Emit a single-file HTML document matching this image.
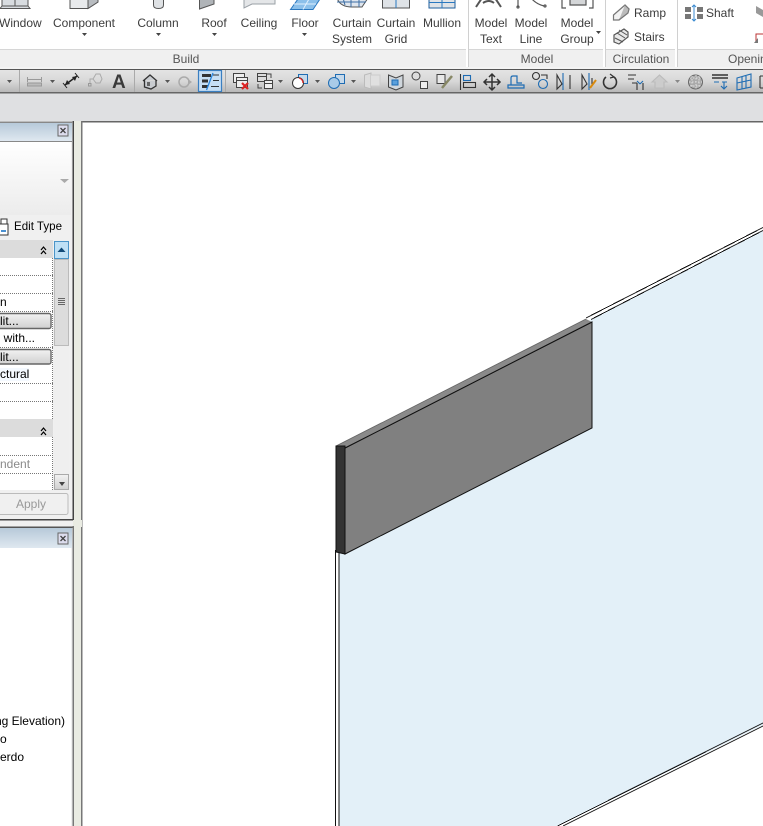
<!DOCTYPE html>
<html><head><meta charset="utf-8"><style>
html,body{margin:0;padding:0;background:#fff;width:763px;height:826px;overflow:hidden}
svg{display:block}
text{font-family:"Liberation Sans",sans-serif;font-size:12px;fill:#3c3c3c}
.c{text-anchor:middle}
.k{fill:#000}
.tt{fill:#555}
</style></head><body>
<svg width="763" height="826" viewBox="0 0 763 826" xmlns="http://www.w3.org/2000/svg">
<defs>
<linearGradient id="tb" x1="0" y1="0" x2="0" y2="1"><stop offset="0" stop-color="#e4e4e4"/><stop offset=".5" stop-color="#d8d8d8"/><stop offset="1" stop-color="#b8b8b8"/></linearGradient>
<linearGradient id="tl" x1="0" y1="0" x2="0" y2="1"><stop offset="0" stop-color="#b7c9d9"/><stop offset="1" stop-color="#dfe8f0"/></linearGradient>
<linearGradient id="pv" x1="0" y1="0" x2="0" y2="1"><stop offset="0" stop-color="#fff"/><stop offset="1" stop-color="#ececec"/></linearGradient>
<linearGradient id="bt" x1="0" y1="0" x2="0" y2="1"><stop offset="0" stop-color="#f2f2f2"/><stop offset="1" stop-color="#d0d0d0"/></linearGradient>
</defs>

<!-- ribbon -->
<rect width="763" height="50" fill="#fff"/>
<rect y="49" width="763" height="1" fill="#d6d6d6"/>
<rect y="50" width="763" height="17" fill="#f0f0f0"/>
<rect x="468" y="0" width="1" height="67" fill="#d0d0d0"/><rect x="605" y="0" width="1" height="67" fill="#d0d0d0"/><rect x="677" y="0" width="1" height="67" fill="#d0d0d0"/>
<rect x="466" y="0" width="2" height="67" fill="#fff"/><rect x="603" y="0" width="2" height="67" fill="#fff"/><rect x="675" y="0" width="2" height="67" fill="#fff"/>

<!-- ribbon icons -->
<g stroke="#555" stroke-width="1" fill="#eef0f2">
<path d="M2-2V6H28V-2M2 6L0 8.500H30L28 6" fill="#d8dce0"/><path d="M15-2V6" />
<path d="M70 1V8.500H88L98 2V-2H70Z" fill="#e8eaec"/><path d="M88 8.500V0" fill="none"/><path d="M88 8.500L98 2V-2H88Z" fill="#b8bcc0"/>
<path d="M153.500-2V5Q153.500 8.500 158.500 8.500T163.500 5V-2" fill="#dfe2e5"/>
<path d="M199.500-2V9L214 4V-2Z" fill="#b0b4b8"/>
<path d="M244-2V8L252 4H275V-2" fill="#e4e6e8" stroke="#9aa0a6"/>
<path d="M290.500 9.500L298-1H320L313 9.500Z" fill="#8cc0ea" stroke="#2a78c0"/><path d="M294 4H316M303 9.500L309-1" stroke="#e0f0ff" fill="none"/>
<path d="M337-2Q340 7 352 7H362L368-2" fill="#dfe6ee" stroke="#555"/><path d="M343-2L345 5M351-2V7M359-2V7M337 2H366" fill="none" stroke="#3d6fa5"/>
<path d="M382.500-2V8H409.500V-2" fill="#dfe3e7"/><path d="M396-2V8" stroke="#2a78c0"/>
<path d="M429-2V8H455V-2" fill="#dfe3e7" stroke="#1f5f9e"/><path d="M429 2.500H455M442-2V8" stroke="#2a78c0" fill="none"/>
</g>
<g fill="none" stroke="#555" stroke-width="1.200">
<path d="M476 7L482-2M501 7L495-2M483 3Q489-1 494 3" stroke-width="2"/>
<path d="M518 7V0" /><circle cx="518" cy="7" r="1"/><path d="M531-2Q536 4 544 6"/><circle cx="545" cy="6" r="1"/>
<path d="M562-2V8H566M593-2V8H589"/><path d="M570 5H586V-2H570Z" fill="#d4d6d8"/>
<path d="M613.500 15L625 5L629 9L619 20H613.500Z" fill="#f2f2f2" stroke="#777"/><path d="M625 5L629 9L628 13L619 20" fill="#bbb" stroke="#777"/>
<path d="M614 35L624 29L628 32V37L619 44L614 42Z" fill="#e8e8e8"/><path d="M617 33L625 38M615 38L623 42M619 30L627 35" stroke-width="1"/>
</g>
<g fill="#777"><rect x="685" y="7" width="6" height="5"/><rect x="685" y="14" width="6" height="5"/><rect x="697" y="7" width="6" height="5"/><rect x="697" y="14" width="6" height="5"/></g>
<path d="M694 5V21M692 7L694 5L696 7M692 19L694 21L696 19" stroke="#3a8ad0" stroke-width="1" fill="none"/>
<path d="M756 6L763 10V17L756 13Z" fill="#999"/><path d="M756 42V34H763" fill="none" stroke="#b33" stroke-width="1"/><path d="M754 43L758 38V43Z" fill="#777"/>

<!-- ribbon text -->
<text x="-1" y="27">Window</text>
<text x="84" y="27" class="c" textLength="62" lengthAdjust="spacingAndGlyphs">Component</text>
<text x="158" y="27" class="c">Column</text>
<text x="214" y="27" class="c">Roof</text>
<text x="259" y="27" class="c">Ceiling</text>
<text x="305" y="27" class="c">Floor</text>
<text x="352" y="27" class="c">Curtain</text><text x="352" y="43" class="c">System</text>
<text x="396" y="27" class="c">Curtain</text><text x="396" y="43" class="c">Grid</text>
<text x="442" y="27" class="c">Mullion</text>
<text x="491" y="27" class="c">Model</text><text x="491" y="43" class="c">Text</text>
<text x="531" y="27" class="c">Model</text><text x="531" y="43" class="c">Line</text>
<text x="577" y="27" class="c">Model</text><text x="577" y="43" class="c">Group</text>
<text x="634" y="17">Ramp</text><text x="634" y="41">Stairs</text><text x="706" y="17">Shaft</text>
<text x="186" y="63" class="c tt">Build</text><text x="537" y="63" class="c tt">Model</text><text x="641" y="63" class="c tt">Circulation</text><text x="728" y="63" class="tt">Openin</text>
<g fill="#444"><path d="M82 33H87L84.500 36ZM156 33H161L158.500 36ZM212 33H217L214.500 36ZM302 33H307L304.500 36ZM596 31H601L598.500 34Z"/></g>

<!-- toolbar -->
<rect y="67" width="763" height="2" fill="#f4f4f4"/>
<rect y="69" width="763" height="1" fill="#555"/>
<rect y="70" width="763" height="22" fill="url(#tb)"/>
<rect y="92" width="763" height="1.500" fill="#666"/>
<rect y="93.500" width="763" height="28" fill="#dfe0e2"/>
<path d="M19.500 70V92M134.500 70V92M225.500 70V92" stroke="#aaa"/>
<g fill="#555">
<path d="M7 80H12L9.500 83ZM50 80H55L52.500 83ZM165 80H170L167.500 83ZM278 80H283L280.500 83ZM315 80H320L317.500 83ZM351 80H356L353.500 83Z"/>
<path d="M675 80H680L677.500 83Z" fill="#888"/>
</g>
<!-- tool icons -->
<g fill="none" stroke="#777" stroke-width="1">
<path d="M27.500 77V82M41.500 77V82M28 79.500H41" stroke="#999"/><rect x="27.500" y="83" width="14" height="3" fill="#bbb" stroke="#999"/>
<path d="M65 85L77 76" stroke="#222" stroke-width="1.500"/><path d="M63 83L67 88M75 73L79 78" stroke="#222"/><path d="M65 85L70 84L67 80ZM77 76L72 77L75 81Z" fill="#222" stroke="none"/>
<rect x="88.500" y="83.500" width="2.500" height="2.500" stroke="#999"/><path d="M90 83V79H93M93 79L96 74H100L102 79L100 83H96Z" stroke="#aaa"/>
<path d="M143 81L150 75L157 81M144.500 80V87L151 89L156 86V80" stroke="#333" stroke-width="1.300" fill="#c9ccd0"/><rect x="147" y="82" width="3" height="4" fill="#666" stroke="none"/>
<circle cx="184" cy="82" r="5" stroke="#aaa" stroke-width="1.500"/><path d="M188 79L192 82L188 85Z" fill="#aaa" stroke="none"/>
</g>
<text x="112" y="88" style="font-size:19px;font-weight:bold;fill:#3a3a3a">A</text>
<rect x="198.500" y="70.500" width="23" height="21" fill="#c6def3" stroke="#3a7fc1" stroke-width="1.200"/>
<g fill="#333"><rect x="202" y="74" width="9" height="3"/><rect x="202" y="79.500" width="6" height="3"/><rect x="202" y="85" width="6" height="3"/></g>
<path d="M213 75H219M213 80.500H219M211 86.500H219" stroke="#333"/><path d="M213 73L206.500 90" stroke="#2a86dd" stroke-width="1.300"/>

<g fill="#eee" stroke="#444" stroke-width="1">
<rect x="233.500" y="73.500" width="11" height="9"/><rect x="236.500" y="77.500" width="11" height="10"/><path d="M237 80.500H247" fill="none"/>
<rect x="257.500" y="73.500" width="9" height="8" fill="#ddd"/><rect x="264.500" y="80.500" width="8" height="8"/><path d="M258 76.500H266M265 83.500H272" fill="none"/>
<path d="M267 74L271 74V78M258 84V88H262" fill="none"/>
<rect x="298.500" y="74.500" width="9" height="9" fill="#c6d9ea" stroke="#1e6cb3"/><circle cx="298" cy="83" r="5.500" fill="#fff" stroke="#333"/>
<rect x="335.500" y="74.500" width="9" height="9" fill="#c6d9ea" stroke="#1e6cb3"/><circle cx="334" cy="83" r="5.500" fill="#a9cbe8" stroke="#1e6cb3"/>
<path d="M364.500 75L371 73V89L364.500 87Z" fill="#ddd" stroke="#bbb"/><path d="M371 75H380V86H371" stroke="#ccc" fill="#e0e0e0"/>
<path d="M388.500 75L396 78L403 75V87L396 90L388.500 87Z" fill="#cfd6dc"/><rect x="392" y="80" width="6" height="5" fill="#5aa0dc" stroke="#1e6cb3"/>
<circle cx="416" cy="76" r="4" fill="#ddd"/><rect x="420.500" y="81.500" width="7" height="7"/>
<rect x="437" y="74.500" width="8" height="9" fill="#e8e8e8"/><path d="M442 88L452 76" stroke="#886" stroke-width="2.500" fill="none"/>
</g>
<path d="M299 78A5 5 0 0 1 303 83" stroke="#d22" fill="none" stroke-width="1.300"/>
<path d="M242 83L248 89M248 83L242 89" stroke="#d22" stroke-width="2.200"/>
<g fill="none" stroke="#333" stroke-width="1.100">
<path d="M460.500 74V90"/><rect x="463.500" y="75.500" width="7" height="5" stroke="#1e6cb3"/><rect x="463.500" y="82.500" width="12" height="5"/>
<path d="M492 74V90M484 82H500M489 77L492 74L495 77M489 87L492 90L495 87M487 79L484 82L487 85M497 79L500 82L497 85" stroke-width="1.500"/>
<path d="M508 85H524V88H508ZM511 85V78Q511 76 513 76H517V83H522" stroke="#1e6cb3" stroke-width="1.200"/>
<circle cx="536" cy="76" r="3.500"/><circle cx="543" cy="84" r="4.500" stroke="#1e6cb3"/><path d="M541 75H547V79"/>
<path d="M557 75V89L562 84ZM570 75V89" /><path d="M563 73V90" stroke="#1e6cb3"/>
<path d="M582 75V89L587 84ZM592 78V84" /><path d="M589 73V90" stroke="#1e6cb3"/><path d="M590 88L596 80" stroke="#d88a10" stroke-width="2"/>
<path d="M606 77A6.500 6.500 0 1 0 614 77" stroke-width="1.600"/><path d="M610 74L614 77L610 78" stroke-width="1.200"/>
<path d="M628 75H636M628 79H634M637 83V90M643 83V90M632 83H637" /><path d="M640 84L637 81M640 84L643 81" stroke="#1e6cb3"/>
<path d="M652 82L659.500 75L667 82H664V88H655V82Z" fill="#ccc" stroke="#bbb"/>
<path d="M712 75H728M712 78H728" stroke-width="1.400"/><path d="M714 82H719M722 82H727M724 82V88M721 86L724 89L727 86" stroke="#1e6cb3"/>
<path d="M737 78L751 74V87L737 90ZM737 83L751 80M742 77V89M746 76V88" stroke="#1e6cb3"/>
<path d="M760 76H763M760 88H763M760 76V88"/>
</g>
<circle cx="695.500" cy="82" r="7" fill="#aaa" stroke="#666"/>
<path d="M690 78H701M689 82H702M690 86H701M692 76V88M696 75V89M699 76V88" stroke="#e0e0e0" stroke-dasharray="1.500 1.500"/>

<!-- background gutter -->
<rect x="73" y="121" width="9" height="705" fill="#e9ebe2"/>
<rect x="0" y="121" width="73" height="705" fill="#f0f0f0"/>
<!-- canvas -->
<rect x="82" y="122" width="681" height="704" fill="#fff"/>
<rect x="81" y="121" width="682" height="1.500" fill="#666"/>
<rect x="81" y="121" width="1.500" height="705" fill="#777"/>

<!-- wall -->
<path d="M339.500 826V448L591 319.500L763 230V725L558 826Z" fill="#e3f0f8"/>
<g stroke="#111" stroke-width="1" fill="none" shape-rendering="crispEdges">
<path d="M335.500 550V826M339 550V826"/>
<path d="M586 318L763 227.500M591 319.500L763 230.500"/>
<path d="M557.500 826L763 723M563 826L763 726"/>
</g>
<path d="M345 448L592 322V428L345 554Z" fill="#808080" stroke="#111" stroke-width="1"/>
<path d="M336 446L586 319L592 322L345 448Z" fill="#8a8a8a"/>
<path d="M336 446L586 319" stroke="#666" stroke-width=".8"/>
<path d="M345 448L592 322" stroke="#111"/>
<path d="M336 446H345V554L336 552Z" fill="#333" stroke="#111" stroke-width="1"/>

<!-- properties panel -->
<rect x="72.500" y="121" width="1.500" height="400" fill="#444"/>
<rect x="0" y="121.500" width="73" height="1.500" fill="#888"/>
<rect x="0" y="123" width="72" height="18" fill="url(#tl)"/>
<rect x="0" y="141" width="72" height="1" fill="#888"/>
<rect x="0" y="142" width="71" height="73" fill="url(#pv)"/>
<path d="M60 179H69L64.500 183Z" fill="#aaa"/>
<rect x="58" y="125" width="10" height="11" fill="#dde" stroke="#666"/><path d="M60.500 128L65.500 133M65.500 128L60.500 133" stroke="#444" stroke-width="1.300"/>
<path d="M1 224V219H7V224M-1 224H8V235H-1" fill="#fff" stroke="#333"/><rect x="1" y="230" width="5" height="2" fill="#4a90d0"/>
<text x="14" y="230" class="k" textLength="48" lengthAdjust="spacingAndGlyphs">Edit Type</text>

<rect x="0" y="240" width="53" height="204" fill="#fff"/>
<rect x="0" y="444" width="53" height="46" fill="#fff"/>
<rect x="0" y="240" width="53" height="18" fill="#dcdcdc"/>
<rect x="0" y="419" width="53" height="18" fill="#dcdcdc"/>
<path d="M41 250L43.500 247L46 250M41 254L43.500 251L46 254M41 431L43.500 428L46 431M41 435L43.500 432L46 435" fill="none" stroke="#000" stroke-width="1.200"/>
<g stroke="#777" stroke-dasharray="1 1"><path d="M0 275.500H53M0 293.500H53M0 311.500H53M0 347.500H53M0 383.500H53M0 401.500H53M0 455.500H53M0 473.500H53"/><path d="M52.500 258V419M52.500 437V490"/></g>
<rect x="-5" y="313.500" width="56" height="15" rx="2" fill="url(#bt)" stroke="#666" stroke-width="1.400"/>
<rect x="-5" y="349.500" width="56" height="14.500" rx="2" fill="url(#bt)" stroke="#666" stroke-width="1.400"/>
<text x="0" y="325" class="k">lit...</text>
<text x="0" y="361" class="k">lit...</text>
<text x="0" y="306" class="k">n</text>
<text x="35" y="342" class="k" text-anchor="end">&#160;with...</text>
<rect x="0" y="368" width="29" height="13" fill="#f4f9ff"/>
<text x="0" y="378" class="k">ctural</text>
<text x="0" y="468" style="fill:#8a8a8a">ndent</text>

<rect x="53.500" y="241" width="15.500" height="249" fill="#efefef"/>
<rect x="54.500" y="241.500" width="14" height="17" fill="#bfe0f5" stroke="#4a94c8"/>
<path d="M57.500 252L61.500 247.500L65.500 252Z" fill="#124a78"/>
<rect x="54.500" y="259.500" width="14" height="86" fill="#dcdcdc" stroke="#bbb"/>
<path d="M58 298.500H65M58 300.500H65M58 302.500H65M58 304.500H65" stroke="#666"/>
<rect x="54.500" y="474.500" width="14" height="15" fill="url(#bt)" stroke="#aaa"/>
<path d="M59 482H65L62 486Z" fill="#444"/>

<rect x="-5" y="493.500" width="73" height="21" rx="2" fill="#f0f0f0" stroke="#bbb"/>
<text x="31" y="508" class="c" style="fill:#999">Apply</text>

<rect x="0" y="519" width="74" height="1.500" fill="#444"/>
<rect x="0" y="520.500" width="73" height="6" fill="#f0f0f0"/>
<rect x="73" y="520" width="9" height="7" fill="#e9ebe2"/>

<!-- project browser -->
<rect x="0" y="526.500" width="74" height="1.500" fill="#555"/>
<rect x="0" y="528" width="72" height="20" fill="url(#tl)"/>
<rect x="72.500" y="526" width="1.500" height="300" fill="#777"/>
<rect x="0" y="548" width="71" height="278" fill="#fff"/>
<rect x="58" y="533" width="10" height="11" fill="#dde" stroke="#666"/><path d="M60.500 536L65.500 541M65.500 536L60.500 541" stroke="#444" stroke-width="1.300"/>
<text x="65" y="725" class="k" text-anchor="end">ng Elevation)</text>
<text x="0" y="743" class="k">o</text>
<text x="0" y="761" class="k">erdo</text>
</svg>
</body></html>
